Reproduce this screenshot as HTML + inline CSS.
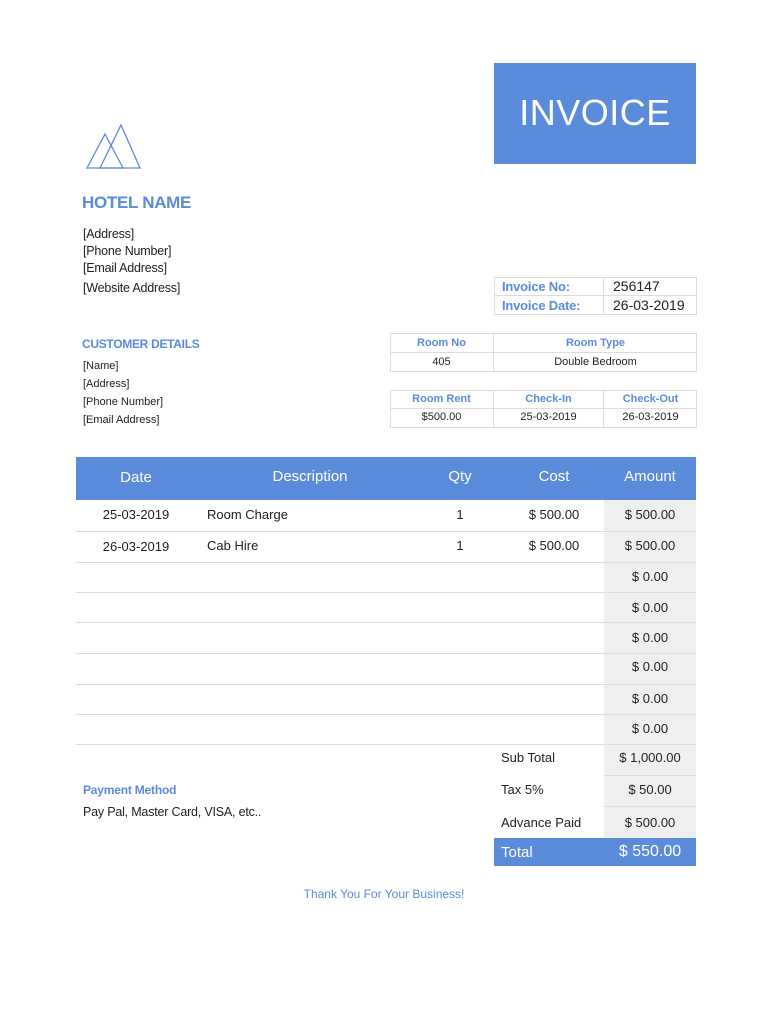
<!DOCTYPE html>
<html><head><meta charset="utf-8"><style>
*{margin:0;padding:0;box-sizing:border-box}
body{width:768px;height:1024px;background:#fff;position:relative;font-family:"Liberation Sans",sans-serif;color:#222;overflow:hidden}
.a{position:absolute;white-space:nowrap}
.b{color:#5b8bdb}
.c{position:absolute;text-align:center;white-space:nowrap}
.l{position:absolute;background:#ddd}
</style></head><body>
<div class="a" style="left:494px;top:63px;width:202px;height:101px;background:#5b8bdb;color:#fff;font-size:36px;line-height:99px;text-align:center;letter-spacing:0.5px">INVOICE</div>
<svg class="a" style="left:80px;top:118px" width="70" height="60"><g fill="none" stroke="#5b8bdb" stroke-width="1.3"><path d="M41 7 L60 50 L20 50 Z"/><path d="M25 16 L43 50 L7 50 Z"/></g></svg>
<div class="a b" style="left:82px;top:193px;font-size:17px;font-weight:bold;letter-spacing:-0.3px">HOTEL NAME</div>
<div class="a" style="left:83px;top:226px;font-size:12.5px;line-height:17px;letter-spacing:-0.2px">[Address]<br>[Phone Number]<br>[Email Address]</div>
<div class="a" style="left:83px;top:281px;font-size:12.5px;letter-spacing:-0.2px">[Website Address]</div>

<div class="a" style="left:494px;top:277px;width:203px;height:38px;border:1px solid #ddd"></div>
<div class="l" style="left:494px;top:295px;width:203px;height:1px"></div>
<div class="l" style="left:603px;top:277px;width:1px;height:38px"></div>
<div class="a b" style="left:502px;top:279px;font-size:13px;font-weight:bold;letter-spacing:-0.2px">Invoice No:</div>
<div class="a b" style="left:502px;top:298px;font-size:13px;font-weight:bold;letter-spacing:-0.2px">Invoice Date:</div>
<div class="a" style="left:613px;top:278px;font-size:14px">256147</div>
<div class="a" style="left:613px;top:297px;font-size:14px">26-03-2019</div>

<div class="a b" style="left:82px;top:337px;font-size:12px;font-weight:bold;letter-spacing:-0.3px">CUSTOMER DETAILS</div>
<div class="a" style="left:83px;top:357px;font-size:11px;line-height:18px">[Name]<br>[Address]<br>[Phone Number]<br>[Email Address]</div>

<div class="a" style="left:390px;top:333px;width:307px;height:39px;border:1px solid #ddd"></div>
<div class="l" style="left:390px;top:352px;width:307px;height:1px"></div>
<div class="l" style="left:493px;top:333px;width:1px;height:39px"></div>
<div class="c b" style="left:390px;width:103px;top:337px;font-size:11px;font-weight:bold">Room No</div>
<div class="c b" style="left:494px;width:203px;top:337px;font-size:11px;font-weight:bold">Room Type</div>
<div class="c" style="left:390px;width:103px;top:356px;font-size:11px">405</div>
<div class="c" style="left:494px;width:203px;top:356px;font-size:11px">Double Bedroom</div>

<div class="a" style="left:390px;top:390px;width:307px;height:38px;border:1px solid #ddd"></div>
<div class="l" style="left:390px;top:408px;width:307px;height:1px"></div>
<div class="l" style="left:493px;top:390px;width:1px;height:38px"></div>
<div class="l" style="left:603px;top:390px;width:1px;height:38px"></div>
<div class="c b" style="left:390px;width:103px;top:393px;font-size:11px;font-weight:bold">Room Rent</div>
<div class="c b" style="left:494px;width:109px;top:393px;font-size:11px;font-weight:bold">Check-In</div>
<div class="c b" style="left:604px;width:93px;top:393px;font-size:11px;font-weight:bold">Check-Out</div>
<div class="c" style="left:390px;width:103px;top:411px;font-size:11px">$500.00</div>
<div class="c" style="left:494px;width:109px;top:411px;font-size:11px">25-03-2019</div>
<div class="c" style="left:604px;width:93px;top:411px;font-size:11px">26-03-2019</div>

<div class="a" style="left:76px;top:457px;width:620px;height:43px;background:#5b8bdb"></div>
<div class="c" style="left:96px;width:80px;top:469px;color:#fff;font-size:15px">Date</div>
<div class="c" style="left:240px;width:140px;top:468px;color:#fff;font-size:15px">Description</div>
<div class="c" style="left:430px;width:60px;top:468px;color:#fff;font-size:15px">Qty</div>
<div class="c" style="left:514px;width:80px;top:468px;color:#fff;font-size:15px">Cost</div>
<div class="c" style="left:604px;width:92px;top:468px;color:#fff;font-size:15px">Amount</div>

<div class="a" style="left:604px;top:500px;width:92px;height:338px;background:#efefef"></div>
<div class="l" style="left:76px;top:531px;width:620px;height:1px"></div>
<div class="l" style="left:76px;top:562px;width:620px;height:1px"></div>
<div class="l" style="left:76px;top:592px;width:620px;height:1px"></div>
<div class="l" style="left:76px;top:622px;width:620px;height:1px"></div>
<div class="l" style="left:76px;top:653px;width:620px;height:1px"></div>
<div class="l" style="left:76px;top:684px;width:620px;height:1px"></div>
<div class="l" style="left:76px;top:714px;width:620px;height:1px"></div>
<div class="l" style="left:76px;top:744px;width:620px;height:1px"></div>
<div class="l" style="left:604px;top:775px;width:92px;height:1px"></div>
<div class="l" style="left:604px;top:806px;width:92px;height:1px"></div>

<div class="c" style="left:96px;width:80px;top:507px;font-size:13px">25-03-2019</div>
<div class="a" style="left:207px;top:507px;font-size:13px">Room Charge</div>
<div class="c" style="left:440px;width:40px;top:507px;font-size:13px">1</div>
<div class="c" style="left:514px;width:80px;top:507px;font-size:13px">$ 500.00</div>
<div class="c" style="left:604px;width:92px;top:507px;font-size:13px">$ 500.00</div>
<div class="c" style="left:96px;width:80px;top:539px;font-size:13px">26-03-2019</div>
<div class="a" style="left:207px;top:538px;font-size:13px">Cab Hire</div>
<div class="c" style="left:440px;width:40px;top:538px;font-size:13px">1</div>
<div class="c" style="left:514px;width:80px;top:538px;font-size:13px">$ 500.00</div>
<div class="c" style="left:604px;width:92px;top:538px;font-size:13px">$ 500.00</div>
<div class="c" style="left:604px;width:92px;top:569px;font-size:13px">$ 0.00</div>
<div class="c" style="left:604px;width:92px;top:600px;font-size:13px">$ 0.00</div>
<div class="c" style="left:604px;width:92px;top:630px;font-size:13px">$ 0.00</div>
<div class="c" style="left:604px;width:92px;top:659px;font-size:13px">$ 0.00</div>
<div class="c" style="left:604px;width:92px;top:691px;font-size:13px">$ 0.00</div>
<div class="c" style="left:604px;width:92px;top:721px;font-size:13px">$ 0.00</div>

<div class="a" style="left:501px;top:750px;font-size:13px">Sub Total</div>
<div class="c" style="left:604px;width:92px;top:750px;font-size:13px">$ 1,000.00</div>
<div class="a" style="left:501px;top:782px;font-size:13px">Tax 5%</div>
<div class="c" style="left:604px;width:92px;top:782px;font-size:13px">$ 50.00</div>
<div class="a" style="left:501px;top:815px;font-size:13px">Advance Paid</div>
<div class="c" style="left:604px;width:92px;top:815px;font-size:13px">$ 500.00</div>
<div class="a" style="left:494px;top:838px;width:202px;height:28px;background:#5b8bdb"></div>
<div class="a" style="left:501px;top:844px;font-size:15px;color:#fff">Total</div>
<div class="c" style="left:604px;width:92px;top:843px;font-size:16px;color:#fff">$ 550.00</div>

<div class="a b" style="left:83px;top:783px;font-size:12px;font-weight:bold;letter-spacing:-0.2px">Payment Method</div>
<div class="a" style="left:83px;top:805px;font-size:12.5px;letter-spacing:-0.2px">Pay Pal, Master Card, VISA, etc..</div>
<div class="c b" style="left:0;width:768px;top:887px;font-size:12px">Thank You For Your Business!</div>
</body></html>
